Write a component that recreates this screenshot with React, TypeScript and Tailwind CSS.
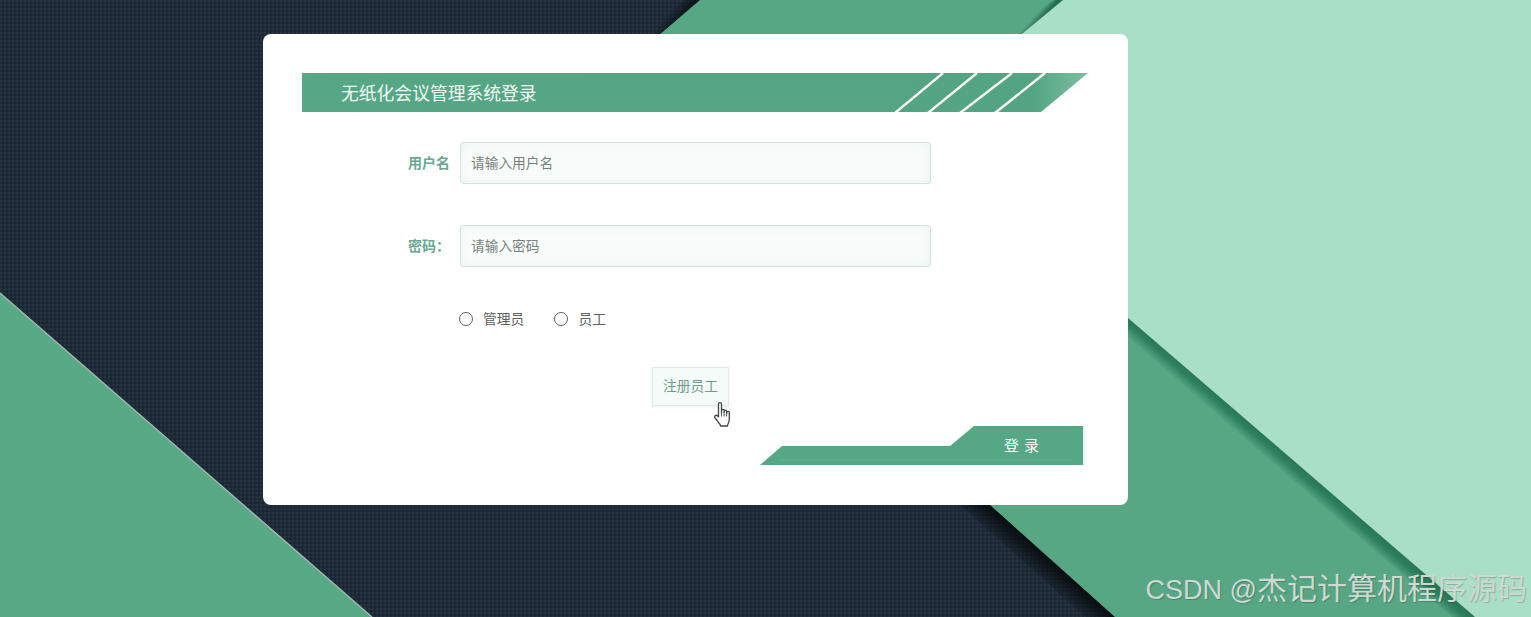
import React from "react";

const cjk = '"Noto Sans CJK SC", "Noto Sans", sans-serif';

function Background() {
  return (
    <svg className="absolute inset-0 h-full w-full" viewBox="0 0 1531 617" preserveAspectRatio="none">
      <defs>
        <pattern id="dots" width="4" height="4" patternUnits="userSpaceOnUse">
          <rect width="4" height="4" fill="#1e2b37" />
          <rect x="0" y="0" width="2" height="2" fill="#243442" />
          <rect x="2" y="2" width="2" height="2" fill="#1a2631" />
        </pattern>
        <linearGradient id="shadeLight" gradientUnits="userSpaceOnUse" x1="1300" y1="467.5" x2="1290" y2="479">
          <stop offset="0" stopColor="#257655" stopOpacity="0.95" />
          <stop offset="0.35" stopColor="#257655" stopOpacity="0.8" />
          <stop offset="1" stopColor="#257655" stopOpacity="0" />
        </linearGradient>
        <linearGradient id="shadeDark" gradientUnits="userSpaceOnUse" x1="1052" y1="561" x2="1036" y2="579">
          <stop offset="0" stopColor="#070b0d" stopOpacity="0.95" />
          <stop offset="1" stopColor="#070b0d" stopOpacity="0" />
        </linearGradient>
        <linearGradient id="shadeTop" gradientUnits="userSpaceOnUse" x1="681" y1="16.5" x2="672" y2="9">
          <stop offset="0" stopColor="#0b1114" stopOpacity="0.75" />
          <stop offset="1" stopColor="#0b1114" stopOpacity="0" />
        </linearGradient>
        <linearGradient id="shadeTopRight" gradientUnits="userSpaceOnUse" x1="1043" y1="16.5" x2="1038" y2="12">
          <stop offset="0" stopColor="#246f50" />
          <stop offset="1" stopColor="#246f50" stopOpacity="0" />
        </linearGradient>
      </defs>
      <rect width="1531" height="617" fill="url(#dots)" />
      {/* dark side shadows */}
      <polygon points="960,478 1115,617 1085,617 930,478" fill="url(#shadeDark)" />
      <polygon points="700,0 640,52 625,40 685,0" fill="url(#shadeTop)" />
      {/* shapes */}
      <polygon points="0,293 372,617 0,617" fill="#58a986" />
      <line x1="0" y1="293" x2="372" y2="617" stroke="#a5b5b0" strokeWidth="1.4" />
      <polygon points="700,0 1063,0 983,66 1128,318 1475,617 1115,617 700,245 560,120" fill="#57a785" />
      {/* shadow that the pale shape drops on the green one */}
      <polygon points="1128,318 1475,617 1452,617 1105,318" fill="url(#shadeLight)" />
      <polygon points="1063,0 1003,50 994,42 1054,0" fill="url(#shadeTopRight)" />
      <polygon points="1063,0 1531,0 1531,617 1475,617 1128,318 983,66" fill="#a8dfc6" />
    </svg>
  );
}

function TitleBand() {
  return (
    <div className="relative h-[39px] w-[786px]">
      <svg className="absolute inset-0" width="786" height="39" viewBox="0 0 786 39">
        <defs>
          <linearGradient id="band" x1="0" y1="0" x2="1" y2="0">
            <stop offset="0" stopColor="#56a785" />
            <stop offset="0.93" stopColor="#53a482" />
            <stop offset="1" stopColor="#7cbfa3" />
          </linearGradient>
        </defs>
        <polygon points="0,0 786,0 739,39 0,39" fill="url(#band)" />
        <g stroke="#ffffff" strokeWidth="2.4">
          <line x1="641" y1="0" x2="593" y2="40" />
          <line x1="675" y1="0" x2="626" y2="40" />
          <line x1="710" y1="0" x2="658" y2="40" />
          <line x1="743" y1="0" x2="693" y2="40" />
        </g>
      </svg>
      <span className="absolute left-[39px] top-[6px] text-[17.8px] leading-[26px] text-[#f2faf6]" style={{ fontFamily: cjk }}>
        无纸化会议管理系统登录
      </span>
    </div>
  );
}

function Field({ label, placeholder }: { label: string; placeholder: string }) {
  return (
    <div className="flex h-[42px] items-center">
      <label className="w-[52px] pb-[1px] text-[14px] font-bold text-[#6aa891]">{label}</label>
      <input
        placeholder={placeholder}
        className="h-[42px] w-[471px] rounded-[3px] border border-[#d3e3dc] bg-[#f8fcfb] px-[10px] pb-[2px] text-[13.7px] shadow-[inset_0_0_8px_rgba(190,225,210,0.25)] outline-none placeholder:text-[#777f7c]"
      />
    </div>
  );
}

function Radio({ label, className }: { label: string; className: string }) {
  return (
    <label className={`flex items-center gap-[10px] text-[13.8px] text-[#5c5f5e] ${className}`}>
      <span className="h-[14px] w-[14px] rounded-full border border-[#5f6362] bg-white" />
      <span className="pb-[2px]">{label}</span>
    </label>
  );
}

export default function App() {
  return (
    <div className="relative h-[617px] w-[1531px] overflow-hidden" style={{ fontFamily: cjk }}>
      <Background />
      <div className="relative ml-[263px] mt-[34px] inline-block h-[471px] w-[865px] rounded-[8px] bg-white px-[39px] pt-[39px]">
        <TitleBand />
        <div className="ml-[106px] mt-[30px] flex flex-col">
          <Field label="用户名" placeholder="请输入用户名" />
          <div className="mt-[41px]">
            <Field label="密码：" placeholder="请输入密码" />
          </div>
          <div className="ml-[51px] mt-[42px] flex h-[20px] items-center">
            <Radio label="管理员" className="mr-[30px]" />
            <Radio label="员工" className="" />
          </div>
        </div>
        <div className="ml-[350px] mt-[38px] flex">
          <button className="h-[39px] w-[77px] border border-[#dcebe5] bg-[#f5fbf9] pb-[2px] text-[13.75px] text-[#6f9a8c] shadow-[0_1px_3px_rgba(180,210,200,0.3)]">
            注册员工
          </button>
        </div>
        <div className="relative ml-[458px] mt-[20px] h-[39px] w-[325px]">
          <svg className="absolute inset-0" width="325" height="39" viewBox="0 0 325 39">
            <polygon points="0,39 22,20 190,20 214,0 323,0 323,39" fill="#56a785" />
            <line x1="20" y1="34" x2="312" y2="34" stroke="#66b092" strokeWidth="1" />
            <line x1="324" y1="0" x2="324" y2="39" stroke="#d6ebe2" strokeWidth="1" />
          </svg>
          <button className="absolute left-[244px] top-[8px] text-[15px] leading-[22px] tracking-[5px] text-white">登录</button>
        </div>
        <svg className="absolute left-[451px] top-[368px]" width="18" height="26" viewBox="0 0 18 26">
          <path
            d="M4.5 2.2c0-2 3-2 3 0v8.6l0-2.2c0-1.6 2.6-1.6 2.6 0v2l0-1.2c0-1.6 2.6-1.6 2.6 0v1.8l0-.8c0-1.5 2.6-1.5 2.6 0v6.6c0 1.6-.2 2.8-1 4.2-.6 1.2-.8 2-.8 2.8H6.7c-.4-1.6-1.2-2.6-2.4-3.8L1.2 16c-1.4-1.5.6-3.6 2.2-2.2l1.1 1z"
            fill="#ffffff"
            stroke="#3c4643"
            strokeWidth="1.3"
            strokeLinejoin="round"
          />
          <path d="M7.5 10.5v4M10.1 10.5v4M12.7 11v3.5" stroke="#3c4643" strokeWidth="0.9" fill="none" />
        </svg>
      </div>
      <div
        className="absolute right-[4px] top-[571px] whitespace-nowrap text-[27px] leading-[36px] text-[#d0d8d3] [text-shadow:1px_1px_1px_rgba(0,0,0,0.2)]"
        style={{ fontFamily: '"Liberation Sans", "Noto Sans CJK SC", sans-serif' }}
      >
        CSDN @<span className="text-[30px]">杰记计算机程序源码</span>
      </div>
    </div>
  );
}
